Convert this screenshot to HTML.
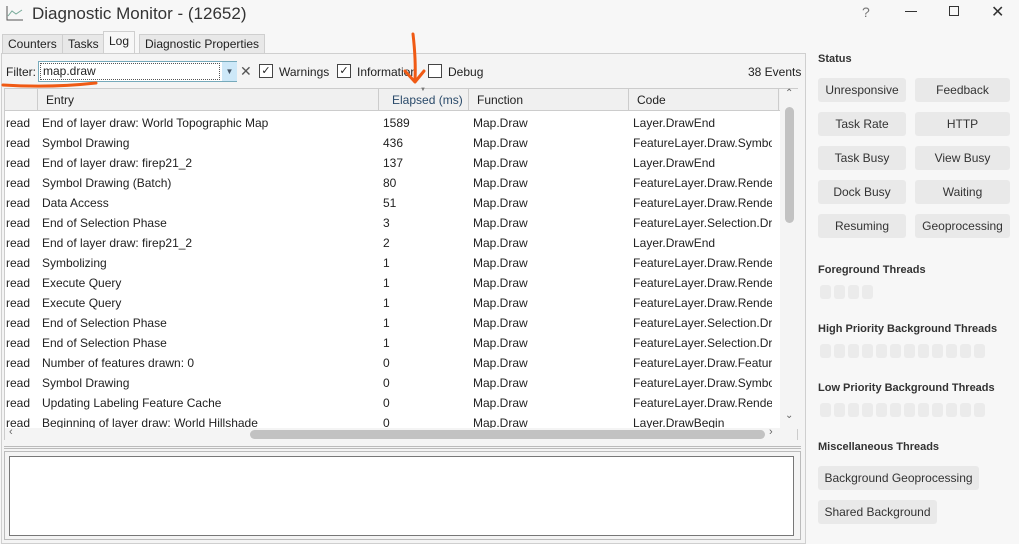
<!DOCTYPE html>
<html><head><style>
*{margin:0;padding:0;box-sizing:border-box}
body{width:1019px;height:544px;background:#f7f7f7;font-family:"Liberation Sans",sans-serif;font-size:12px;color:#222;position:relative;overflow:hidden}
.a{position:absolute;white-space:nowrap}
.btn{position:absolute;background:#e9e9e9;border-radius:3px;height:24px;line-height:24px;text-align:center;font-size:12px;color:#333}
.sq{position:absolute;width:11px;height:14px;background:#ebebeb;border-radius:3px}
.h{font-weight:bold;color:#333;font-size:11px}
.row{position:absolute;left:0;height:20px;line-height:20px;width:780px}
.row span{position:absolute}
.tab{position:absolute;top:34px;height:20px;line-height:19px;border:1px solid #cfcfcf;background:#e8e8e8;padding:0 5px;font-size:12px}
</style></head><body>
<svg class="a" style="left:6px;top:5px" width="18" height="16"><polyline points="1,1 1,15 17,15" fill="none" stroke="#555"/><polyline points="2,11 6,6 10,9 16,5" fill="none" stroke="#7a9"/></svg>
<div class="a" style="left:32px;top:4px;font-size:17px;color:#333">Diagnostic Monitor - (12652)</div>
<div class="a" style="left:862px;top:4px;font-size:14px;color:#777">?</div>
<div class="a" style="left:905px;top:11px;width:12px;height:1px;background:#333"></div>
<div class="a" style="left:949px;top:6px;width:10px;height:10px;border:1px solid #333"></div>
<div class="a" style="left:991px;top:2px;font-size:16px;color:#333">✕</div>

<div class="tab" style="left:2px">Counters</div>
<div class="tab" style="left:62px">Tasks</div>
<div class="tab" style="left:103px;top:31px;height:23px;background:#f7f7f7;border-bottom:none">Log</div>
<div class="tab" style="left:139px">Diagnostic Properties</div>

<div class="a" style="left:1px;top:53px;width:805px;height:491px;border:1px solid #cfcfcf;background:#f4f4f4"></div>
<div class="a" style="left:6px;top:65px">Filter:</div>
<div class="a" style="left:38px;top:61px;width:199px;height:21px;border:1px solid #7ab;background:#fff"></div>
<div class="a" style="left:40px;top:63px;width:180px;height:17px;border:1px dotted #555;padding-left:2px;line-height:15px">map.draw</div>
<div class="a" style="left:222px;top:62px;width:15px;height:19px;background:#cde8f8;color:#456;font-size:8px;text-align:center;line-height:19px">▼</div>
<div class="a" style="left:240px;top:63px;font-size:14px;color:#555">✕</div>
<div class="a" style="left:259px;top:64px;width:14px;height:14px;border:1px solid #444;background:#fff;font-size:11px;line-height:12px;text-align:center">✓</div>
<div class="a" style="left:279px;top:65px">Warnings</div>
<div class="a" style="left:337px;top:64px;width:14px;height:14px;border:1px solid #444;background:#fff;font-size:11px;line-height:12px;text-align:center">✓</div>
<div class="a" style="left:357px;top:65px">Information</div>
<div class="a" style="left:428px;top:64px;width:14px;height:14px;border:1px solid #444;background:#fff"></div>
<div class="a" style="left:448px;top:65px">Debug</div>
<div class="a" style="left:748px;top:65px">38 Events</div>

<div class="a" style="left:4px;top:88px;width:794px;height:352px;background:#fff;border:1px solid #ccc"></div>
<div class="a" style="left:5px;top:89px;width:775px;height:22px;background:#f0f0f0;border-bottom:1px solid #ccc"></div>
<div class="a" style="left:37px;top:89px;width:1px;height:22px;background:#ccc"></div>
<div class="a" style="left:378px;top:89px;width:1px;height:22px;background:#ccc"></div>
<div class="a" style="left:468px;top:89px;width:1px;height:22px;background:#ccc"></div>
<div class="a" style="left:628px;top:89px;width:1px;height:22px;background:#ccc"></div>
<div class="a" style="left:778px;top:89px;width:1px;height:22px;background:#ccc"></div>
<div class="a" style="left:46px;top:93px">Entry</div>
<div class="a" style="left:392px;top:93px;color:#2a4a6a">Elapsed (ms)</div>
<div class="a" style="left:420px;top:87px;font-size:6px;color:#777">▼</div>
<div class="a" style="left:477px;top:93px">Function</div>
<div class="a" style="left:637px;top:93px">Code</div>
<div class="a" style="left:780px;top:89px;width:18px;height:340px;background:#f4f4f4"></div>
<div class="a" style="left:785px;top:88px;font-size:10px;color:#666">⌃</div>
<div class="a" style="left:785px;top:107px;width:9px;height:116px;background:#c2c2c2;border-radius:5px"></div>
<div class="a" style="left:785px;top:410px;font-size:10px;color:#666">⌄</div>
<div class="a" style="left:5px;top:428px;width:792px;height:12px;background:#f4f4f4"></div>
<div class="a" style="left:9px;top:426px;font-size:11px;color:#666">‹</div>
<div class="a" style="left:250px;top:430px;width:515px;height:9px;background:#c2c2c2;border-radius:5px"></div>
<div class="a" style="left:769px;top:426px;font-size:11px;color:#666">›</div>

<div style="position:absolute;left:0;top:0;width:772px;height:428px;overflow:hidden">
<div class="row" style="top:113px"><span style="left:6px">read</span><span style="left:42px">End of layer draw: World Topographic Map</span><span style="left:383px">1589</span><span style="left:473px">Map.Draw</span><span style="left:633px">Layer.DrawEnd</span></div>
<div class="row" style="top:133px"><span style="left:6px">read</span><span style="left:42px">Symbol Drawing</span><span style="left:383px">436</span><span style="left:473px">Map.Draw</span><span style="left:633px">FeatureLayer.Draw.Symbol</span></div>
<div class="row" style="top:153px"><span style="left:6px">read</span><span style="left:42px">End of layer draw: firep21_2</span><span style="left:383px">137</span><span style="left:473px">Map.Draw</span><span style="left:633px">Layer.DrawEnd</span></div>
<div class="row" style="top:173px"><span style="left:6px">read</span><span style="left:42px">Symbol Drawing (Batch)</span><span style="left:383px">80</span><span style="left:473px">Map.Draw</span><span style="left:633px">FeatureLayer.Draw.Render</span></div>
<div class="row" style="top:193px"><span style="left:6px">read</span><span style="left:42px">Data Access</span><span style="left:383px">51</span><span style="left:473px">Map.Draw</span><span style="left:633px">FeatureLayer.Draw.Render</span></div>
<div class="row" style="top:213px"><span style="left:6px">read</span><span style="left:42px">End of Selection Phase</span><span style="left:383px">3</span><span style="left:473px">Map.Draw</span><span style="left:633px">FeatureLayer.Selection.Dra</span></div>
<div class="row" style="top:233px"><span style="left:6px">read</span><span style="left:42px">End of layer draw: firep21_2</span><span style="left:383px">2</span><span style="left:473px">Map.Draw</span><span style="left:633px">Layer.DrawEnd</span></div>
<div class="row" style="top:253px"><span style="left:6px">read</span><span style="left:42px">Symbolizing</span><span style="left:383px">1</span><span style="left:473px">Map.Draw</span><span style="left:633px">FeatureLayer.Draw.Render</span></div>
<div class="row" style="top:273px"><span style="left:6px">read</span><span style="left:42px">Execute Query</span><span style="left:383px">1</span><span style="left:473px">Map.Draw</span><span style="left:633px">FeatureLayer.Draw.Render</span></div>
<div class="row" style="top:293px"><span style="left:6px">read</span><span style="left:42px">Execute Query</span><span style="left:383px">1</span><span style="left:473px">Map.Draw</span><span style="left:633px">FeatureLayer.Draw.Render</span></div>
<div class="row" style="top:313px"><span style="left:6px">read</span><span style="left:42px">End of Selection Phase</span><span style="left:383px">1</span><span style="left:473px">Map.Draw</span><span style="left:633px">FeatureLayer.Selection.Dra</span></div>
<div class="row" style="top:333px"><span style="left:6px">read</span><span style="left:42px">End of Selection Phase</span><span style="left:383px">1</span><span style="left:473px">Map.Draw</span><span style="left:633px">FeatureLayer.Selection.Dra</span></div>
<div class="row" style="top:353px"><span style="left:6px">read</span><span style="left:42px">Number of features drawn: 0</span><span style="left:383px">0</span><span style="left:473px">Map.Draw</span><span style="left:633px">FeatureLayer.Draw.Feature</span></div>
<div class="row" style="top:373px"><span style="left:6px">read</span><span style="left:42px">Symbol Drawing</span><span style="left:383px">0</span><span style="left:473px">Map.Draw</span><span style="left:633px">FeatureLayer.Draw.Symbol</span></div>
<div class="row" style="top:393px"><span style="left:6px">read</span><span style="left:42px">Updating Labeling Feature Cache</span><span style="left:383px">0</span><span style="left:473px">Map.Draw</span><span style="left:633px">FeatureLayer.Draw.Render</span></div>
<div class="row" style="top:413px"><span style="left:6px">read</span><span style="left:42px">Beginning of layer draw: World Hillshade</span><span style="left:383px">0</span><span style="left:473px">Map.Draw</span><span style="left:633px">Layer.DrawBegin</span></div>
</div>

<div class="a" style="left:4px;top:446px;width:797px;height:3px;border-top:1px solid #bbb;border-bottom:1px solid #bbb"></div>
<div class="a" style="left:4px;top:451px;width:797px;height:89px;border:1px solid #bbb;background:#f4f4f4"></div>
<div class="a" style="left:9px;top:456px;width:785px;height:80px;border:1px solid #777;background:#fff"></div>

<svg class="a" style="left:0;top:30px" width="440" height="60"><path d="M3 55 Q50 58 96 53" stroke="#f05a14" stroke-width="3" fill="none" stroke-linecap="round"/><path d="M413 4 Q416 30 415 50" stroke="#f05a14" stroke-width="3" fill="none" stroke-linecap="round"/><path d="M405 41 L415 52 L424 41" stroke="#f05a14" stroke-width="3" fill="none" stroke-linecap="round" stroke-linejoin="round"/></svg>

<div class="a h" style="left:818px;top:53px">Status</div>
<div class="btn" style="left:818px;top:78px;width:88px">Unresponsive</div>
<div class="btn" style="left:915px;top:78px;width:95px">Feedback</div>
<div class="btn" style="left:818px;top:112px;width:88px">Task Rate</div>
<div class="btn" style="left:915px;top:112px;width:95px">HTTP</div>
<div class="btn" style="left:818px;top:146px;width:88px">Task Busy</div>
<div class="btn" style="left:915px;top:146px;width:95px">View Busy</div>
<div class="btn" style="left:818px;top:180px;width:88px">Dock Busy</div>
<div class="btn" style="left:915px;top:180px;width:95px">Waiting</div>
<div class="btn" style="left:818px;top:214px;width:88px">Resuming</div>
<div class="btn" style="left:915px;top:214px;width:95px">Geoprocessing</div>
<div class="a h" style="left:818px;top:264px">Foreground Threads</div>
<div class="sq" style="left:820px;top:285px"></div><div class="sq" style="left:834px;top:285px"></div><div class="sq" style="left:848px;top:285px"></div><div class="sq" style="left:862px;top:285px"></div>
<div class="a h" style="left:818px;top:323px">High Priority Background Threads</div>
<div class="sq" style="left:820px;top:344px"></div><div class="sq" style="left:834px;top:344px"></div><div class="sq" style="left:848px;top:344px"></div><div class="sq" style="left:862px;top:344px"></div><div class="sq" style="left:876px;top:344px"></div><div class="sq" style="left:890px;top:344px"></div><div class="sq" style="left:904px;top:344px"></div><div class="sq" style="left:918px;top:344px"></div><div class="sq" style="left:932px;top:344px"></div><div class="sq" style="left:946px;top:344px"></div><div class="sq" style="left:960px;top:344px"></div><div class="sq" style="left:974px;top:344px"></div>
<div class="a h" style="left:818px;top:382px">Low Priority Background Threads</div>
<div class="sq" style="left:820px;top:403px"></div><div class="sq" style="left:834px;top:403px"></div><div class="sq" style="left:848px;top:403px"></div><div class="sq" style="left:862px;top:403px"></div><div class="sq" style="left:876px;top:403px"></div><div class="sq" style="left:890px;top:403px"></div><div class="sq" style="left:904px;top:403px"></div><div class="sq" style="left:918px;top:403px"></div><div class="sq" style="left:932px;top:403px"></div><div class="sq" style="left:946px;top:403px"></div><div class="sq" style="left:960px;top:403px"></div><div class="sq" style="left:974px;top:403px"></div>
<div class="a h" style="left:818px;top:441px">Miscellaneous Threads</div>
<div class="btn" style="left:818px;top:466px;width:161px">Background Geoprocessing</div>
<div class="btn" style="left:818px;top:500px;width:119px">Shared Background</div>
</body></html>
